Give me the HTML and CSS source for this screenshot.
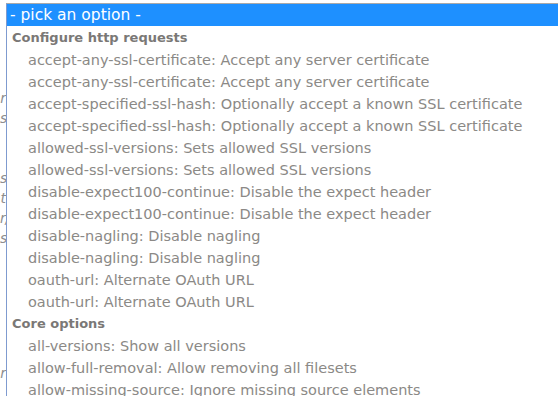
FILE: index.html
```html
<!DOCTYPE html>
<html lang="en">
<head>
  <meta charset="UTF-8">
  <title>pick an option</title>
  <link rel="stylesheet" href="styles.css">
</head>
<body>
  <div class="page-text">
    <p>r</p>
    <p>s</p>
    <p>&nbsp;</p>
    <p>&nbsp;</p>
    <p>s</p>
    <p>t</p>
    <p>r,</p>
    <p>s,</p>
    <p class="far">r</p>
  </div>

  <div class="dropdown">
    <div class="option selected">- pick an option -</div>
    <div class="group">Configure http requests</div>
    <div class="option">accept-any-ssl-certificate: Accept any server certificate</div>
    <div class="option">accept-any-ssl-certificate: Accept any server certificate</div>
    <div class="option">accept-specified-ssl-hash: Optionally accept a known SSL certificate</div>
    <div class="option">accept-specified-ssl-hash: Optionally accept a known SSL certificate</div>
    <div class="option">allowed-ssl-versions: Sets allowed SSL versions</div>
    <div class="option">allowed-ssl-versions: Sets allowed SSL versions</div>
    <div class="option">disable-expect100-continue: Disable the expect header</div>
    <div class="option">disable-expect100-continue: Disable the expect header</div>
    <div class="option">disable-nagling: Disable nagling</div>
    <div class="option">disable-nagling: Disable nagling</div>
    <div class="option">oauth-url: Alternate OAuth URL</div>
    <div class="option">oauth-url: Alternate OAuth URL</div>
    <div class="group">Core options</div>
    <div class="option">all-versions: Show all versions</div>
    <div class="option">allow-full-removal: Allow removing all filesets</div>
    <div class="option">allow-missing-source: Ignore missing source elements</div>
  </div>
</body>
</html>
```

FILE: styles.css
```css
* {
  box-sizing: border-box;
}

html, body {
  margin: 0;
  height: 100%;
  overflow: hidden;
  background: #fff;
}

body {
  position: relative;
  font-family: "DejaVu Sans", sans-serif;
}

/* page content peeking out left of the dropdown */
.page-text {
  position: absolute;
  top: 88px;
  left: 0;
  width: 6px;
  text-align: right;
  font-style: italic;
  font-size: 14px;
  line-height: 20px;
  color: #8e8e8e;
}

.page-text p {
  margin: 0;
  white-space: nowrap;
}

.page-text .far {
  margin-top: 115px;
}

.dropdown {
  position: absolute;
  top: 3px;
  left: 6px;
  right: 0;
  bottom: 0;
  overflow: hidden;
  background: #fff;
  border-top: 1px solid #a9a9a9;
  border-left: 1px solid #7f9bd0;
  font-size: 14.5px;
  color: #8b8986;
}

.option, .group {
  height: 22px;
  line-height: 24px;
  white-space: nowrap;
}

.option {
  padding-left: 21px;
}

.option.selected {
  padding-left: 3px;
  line-height: 22px;
  background: #1e90ff;
  color: #fff;
  font-size: 15.5px;
}

.group {
  padding-left: 5px;
  font-size: 13px;
  font-weight: bold;
  color: #7a7876;
}
```
